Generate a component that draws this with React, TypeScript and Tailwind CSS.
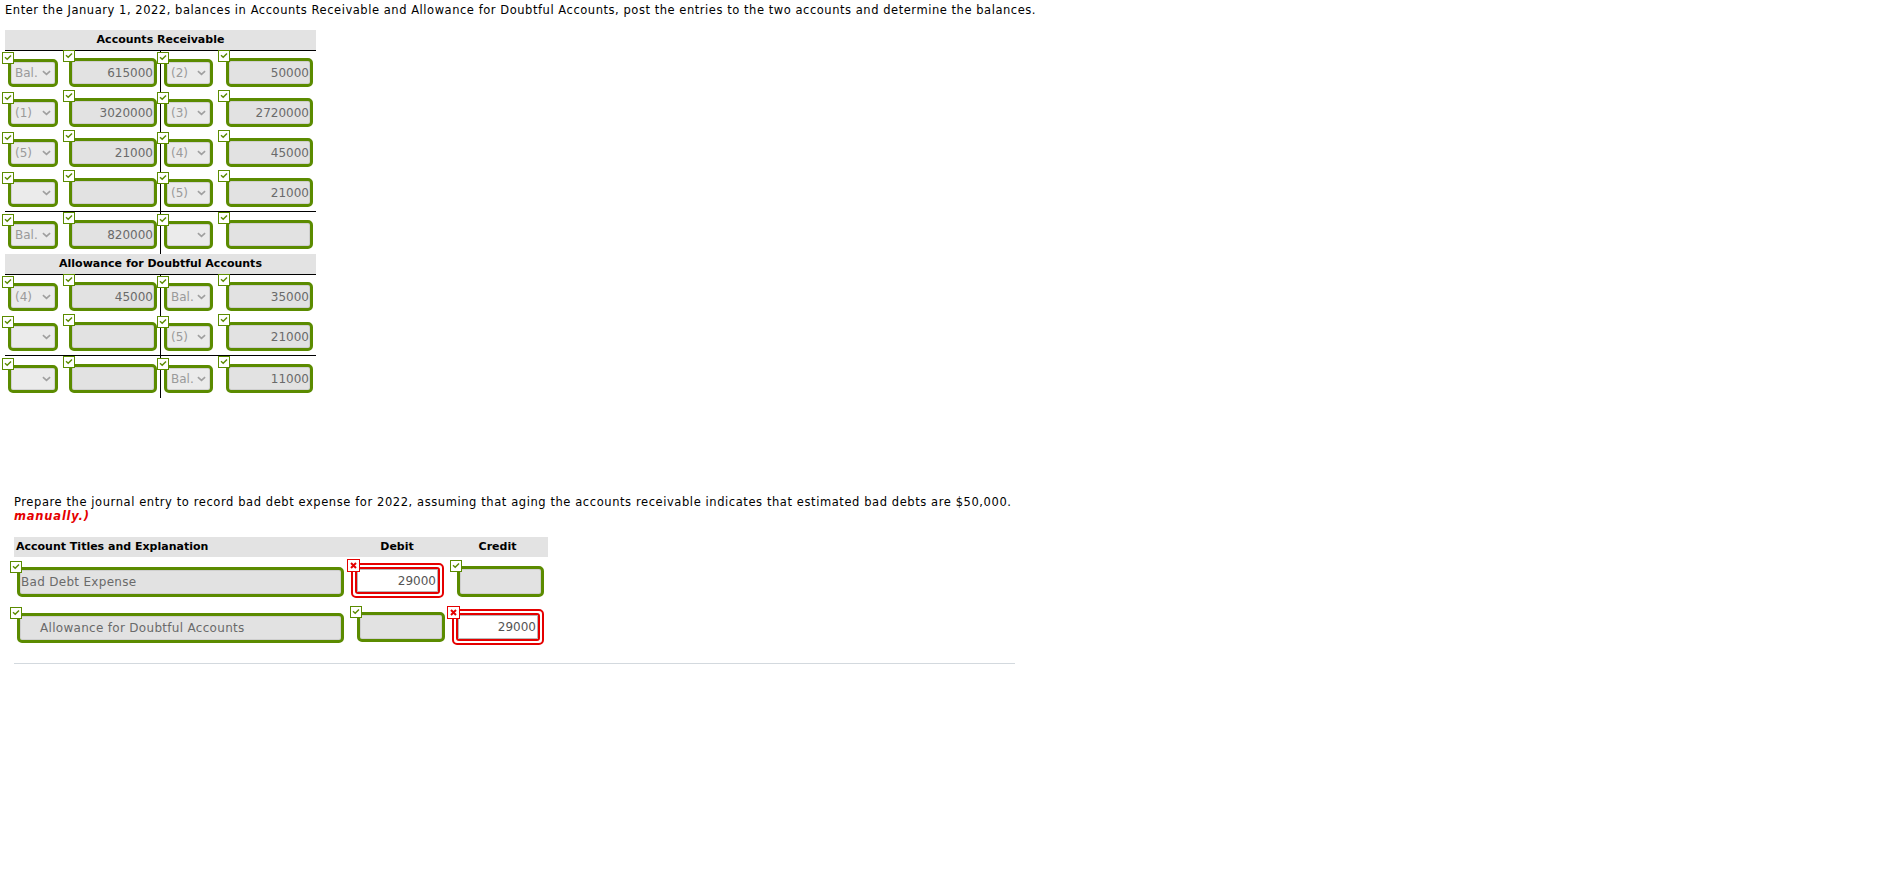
import React from "react";

function Check({ className }: { className: string }) {
  return (
    <span className={"absolute z-10 w-[12px] h-[12px] bg-white border border-[#5b8b00] " + className}>
      <svg viewBox="0 0 10 10" className="absolute inset-0 w-full h-full">
        <path d="M2 4.3 L4.2 6.3 L8 2.4" stroke="#5b8b00" strokeWidth="1.4" fill="none" />
      </svg>
    </span>
  );
}

function XMark({ className }: { className: string }) {
  return (
    <span className={"absolute z-10 w-[13px] h-[13px] bg-white border border-[#e50000] " + className}>
      <svg viewBox="0 0 11 11" className="absolute inset-0 w-full h-full">
        <path d="M3 3 L8 8 M8 3 L3 8" stroke="#e50000" strokeWidth="2" fill="none" />
      </svg>
    </span>
  );
}

function Chevron() {
  return (
    <svg viewBox="0 0 10 6" className="absolute right-[4px] top-1/2 -translate-y-1/2 w-[9px] h-[6px]">
      <path d="M1 1 L5 4.6 L9 1" stroke="#a0a0a0" strokeWidth="1.8" fill="none" />
    </svg>
  );
}

function Sel({ v, w, last, right }: { v: string; w: string; last?: boolean; right?: boolean }) {
  return (
    <div className={"relative h-[28px] " + w + " " + (last ? "mt-[9px]" : "mt-[8px]")}>
      <Check className={right ? "-left-[7px] -top-[7px]" : "-left-[6px] -top-[7px]"} />
      <div className="h-full w-full border-[3px] border-[#5b8b00] rounded-[5px] bg-[#ebebeb] shadow-[inset_0_0_0_1px_#d2d2d2] flex items-center pl-[4px] text-[12px] text-[#9a9a9a] relative">
        {v}
        <Chevron />
      </div>
    </div>
  );
}

function Amt({ v, w, last, right }: { v: string; w: string; last?: boolean; right?: boolean }) {
  return (
    <div className={"relative h-[29px] " + w + " " + (last ? "mt-[8px]" : "mt-[7px]")}>
      <Check className={right ? "-left-[8px] -top-[8px]" : "-left-[6px] -top-[8px]"} />
      <div className="h-full w-full border-[3px] border-[#5b8b00] rounded-[5px] bg-[#e2e2e2] shadow-[inset_0_0_0_1px_#cfcfcf] flex items-center justify-end pr-[1px] text-[12px] text-[#6a6a6a]">
        {v}
      </div>
    </div>
  );
}

type R = [string, string, string, string];

function TRow({ r, kind }: { r: R; kind: "normal" | "line" | "last" }) {
  const rowCls =
    kind === "normal"
      ? "flex h-[40px]"
      : kind === "line"
      ? "flex h-[41px] border-b border-black"
      : "flex h-[42px]";
  const last = kind === "last";
  return (
    <div className={rowCls}>
      <div className="w-[156px] border-r border-black flex items-start pl-[3px] gap-[11px]">
        <Sel v={r[0]} w="w-[50px]" last={last} />
        <Amt v={r[1]} w="w-[88px]" last={last} />
      </div>
      <div className="flex-1 flex items-start pl-[3px] gap-[13px]">
        <Sel v={r[2]} w="w-[49px]" last={last} right />
        <Amt v={r[3]} w="w-[87px]" last={last} right />
      </div>
    </div>
  );
}

function THead({ t }: { t: string }) {
  return (
    <div className="h-[21px] bg-[#e3e3e3] border-b border-black text-center font-bold text-[11px] leading-[20px] text-black">
      {t}
    </div>
  );
}

function GreenBox({ children, cls }: { children?: React.ReactNode; cls: string }) {
  return (
    <div className={"relative " + cls}>
      <Check className="-left-[7px] -top-[6px]" />
      <div className="h-full w-full border-[3px] border-[#5b8b00] rounded-[5px] bg-[#e2e2e2] shadow-[inset_0_0_0_1px_#cfcfcf] flex items-center text-[12px] tracking-[0.3px] text-[#6a6a6a]">
        {children}
      </div>
    </div>
  );
}

function RedBox({ v, cls, xcls }: { v: string; cls: string; xcls: string }) {
  return (
    <div className={"relative " + cls}>
      <XMark className={xcls} />
      <div className="h-full w-full rounded-[5px] border-2 border-[#e50000] p-[2px] bg-white">
        <div className="h-full w-full rounded-[3px] border-2 border-[#e50000]">
          <div className="h-full w-full border border-[#b8b8b8] bg-white flex items-center justify-end pr-[1px] text-[12px] text-[#555]">
            {v}
          </div>
        </div>
      </div>
    </div>
  );
}

export default function App() {
  const ar: R[] = [
    ["Bal.", "615000", "(2)", "50000"],
    ["(1)", "3020000", "(3)", "2720000"],
    ["(5)", "21000", "(4)", "45000"],
    ["", "", "(5)", "21000"],
    ["Bal.", "820000", "", ""],
  ];
  const al: R[] = [
    ["(4)", "45000", "Bal.", "35000"],
    ["", "", "(5)", "21000"],
    ["", "", "Bal.", "11000"],
  ];
  return (
    <div className="min-h-[870px] w-full bg-white text-black font-['DejaVu_Sans',Verdana,sans-serif] text-[11px]">
      <p className="pl-[5px] pt-[3px] leading-[14px] text-[11.5px] tracking-[0.54px]">
        Enter the January 1, 2022, balances in Accounts Receivable and Allowance for Doubtful Accounts, post the entries to the two accounts and determine the balances.
      </p>

      <div className="ml-[5px] mt-[13px] w-[311px]">
        <THead t="Accounts Receivable" />
        <TRow r={ar[0]} kind="normal" />
        <TRow r={ar[1]} kind="normal" />
        <TRow r={ar[2]} kind="normal" />
        <TRow r={ar[3]} kind="line" />
        <TRow r={ar[4]} kind="last" />
        <THead t="Allowance for Doubtful Accounts" />
        <TRow r={al[0]} kind="normal" />
        <TRow r={al[1]} kind="line" />
        <TRow r={al[2]} kind="last" />
      </div>

      <div className="pl-[14px] mt-[97px]">
        <p className="leading-[14px] text-[11.5px] tracking-[0.58px]">
          Prepare the journal entry to record bad debt expense for 2022, assuming that aging the accounts receivable indicates that estimated bad debts are $50,000.
          <br />
          <span className="text-[#e50000] font-bold italic tracking-[0.8px]">manually.)</span>
        </p>

        <div className="mt-[14px] w-[534px]">
          <div className="grid grid-cols-[333px_100px_101px] h-[20px] bg-[#e3e3e3] font-bold leading-[20px]">
            <div className="pl-[2px]">Account Titles and Explanation</div>
            <div className="text-center">Debit</div>
            <div className="text-center">Credit</div>
          </div>

          <div className="grid grid-cols-[333px_100px_101px] h-[46px] items-start">
            <div className="pl-[3px] pt-[10px]">
              <GreenBox cls="w-[327px] h-[30px]">
                <span className="pl-[1px]">Bad Debt Expense</span>
              </GreenBox>
            </div>
            <div className="pl-[4px] pt-[6px]">
              <RedBox v="29000" cls="w-[93px] h-[35px]" xcls="-left-[4px] -top-[4px]" />
            </div>
            <div className="pl-[10px] pt-[9px]">
              <GreenBox cls="w-[87px] h-[31px]" />
            </div>
          </div>

          <div className="grid grid-cols-[333px_100px_101px] h-[46px] items-start">
            <div className="pl-[3px] pt-[10px]">
              <GreenBox cls="w-[327px] h-[30px]">
                <span className="pl-[20px]">Allowance for Doubtful Accounts</span>
              </GreenBox>
            </div>
            <div className="pl-[10px] pt-[9px]">
              <GreenBox cls="w-[88px] h-[30px]" />
            </div>
            <div className="pl-[5px] pt-[6px]">
              <RedBox v="29000" cls="w-[92px] h-[36px]" xcls="-left-[5px] -top-[3px]" />
            </div>
          </div>
        </div>

        <div className="mt-[14px] w-[1001px] h-px bg-[#d3d9de]" />
      </div>
    </div>
  );
}
